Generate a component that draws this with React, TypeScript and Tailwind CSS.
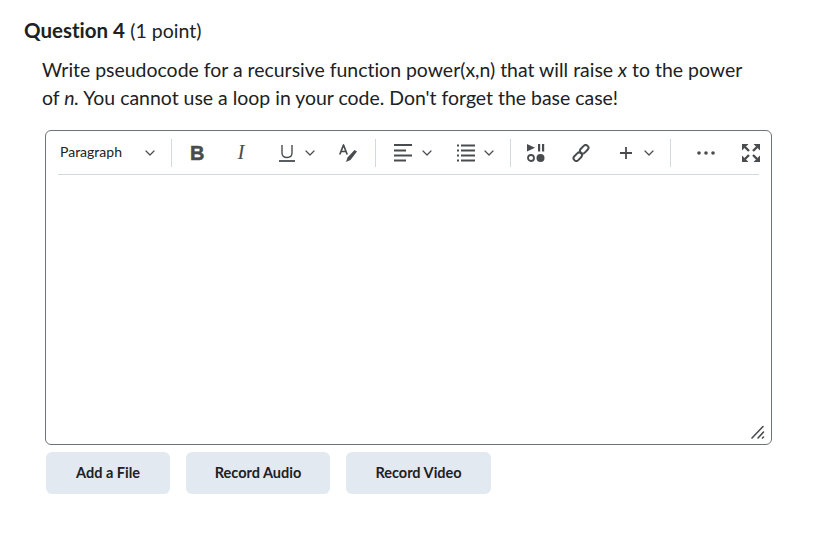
const ink = '#494c4e'

function Chevron({ className = '' }: { className?: string }) {
  return (
    <svg width="10" height="6" viewBox="0 0 10 6" className={`shrink-0 ${className}`} fill="none" stroke={ink} strokeWidth="1.200" strokeLinecap="round" strokeLinejoin="round">
      <path d="M1 1l4 4 4-4" />
    </svg>
  )
}

function Sep({ className = '' }: { className?: string }) {
  return <div className={`w-px h-7 bg-[#d3d9e3] shrink-0 ${className}`} />
}

const UnderlineIcon = () => (
  <svg width="18" height="18" viewBox="0 0 18 18" fill="none" stroke={ink} className="shrink-0 ml-[33px]">
    <path d="M4 1v8c0 3 2 4.500 5 4.500s5-1.500 5-4.500V1" strokeWidth="1.400" />
    <path d="M1 17h16" strokeWidth="1.800" />
  </svg>
)

const ColorIcon = () => (
  <svg width="18" height="18" viewBox="0 0 18 18" fill="none" className="shrink-0 ml-[24px]">
    <path d="M.8 10.500L4.500 1l3.700 9.500M2 7.500h5" stroke={ink} strokeWidth="1.700" strokeLinejoin="round" />
    <path d="M18 7.500l-2.500-1.500-7 7.500-1.500 4.500 4.500-2z" fill={ink} />
  </svg>
)

const AlignIcon = () => (
  <svg width="18" height="18" viewBox="0 0 18 18" stroke={ink} strokeWidth="1.800" fill="none" className="shrink-0 ml-[18px]">
    <path d="M0 1h18M0 6.500h12M0 11.500h18M0 16.500h12" />
  </svg>
)

const ListIcon = () => (
  <svg width="18" height="18" viewBox="0 0 18 18" stroke={ink} strokeWidth="1.800" fill="none" className="shrink-0 ml-[25px]">
    <path d="M4 1.500h14M4 6.500h14M4 11.500h14M4 16.500h14" />
    <path d="M0 1.500h2M0 6.500h2M0 11.500h2M0 16.500h2" />
  </svg>
)

const MediaIcon = () => (
  <svg width="18" height="18" viewBox="0 0 18 18" fill={ink} className="shrink-0 ml-[16px]">
    <path d="M0 0l8 3.700-8 3.800z" />
    <rect x="11" y="0" width="2.200" height="7.500" />
    <rect x="15" y="0" width="2.200" height="7.500" />
    <circle cx="4" cy="14" r="3" fill="none" stroke={ink} strokeWidth="1.800" />
    <circle cx="13.500" cy="14" r="4" />
  </svg>
)

const LinkIcon = () => (
  <svg width="18" height="18" viewBox="0 0 18 18" fill="none" stroke={ink} strokeWidth="2" className="shrink-0 ml-[27px]">
    <rect x="7.500" y="2.500" width="9.500" height="5.500" rx="2.750" transform="rotate(-45 12.250 5.250)" />
    <rect x="1" y="10" width="9.500" height="5.500" rx="2.750" transform="rotate(-45 5.750 12.750)" />
  </svg>
)

const PlusIcon = () => (
  <svg width="12" height="12" viewBox="0 0 12 12" stroke={ink} strokeWidth="1.800" className="shrink-0 ml-[30px]">
    <path d="M6 0v12M0 6h12" />
  </svg>
)

const DotsIcon = () => (
  <svg width="18" height="4" viewBox="0 0 18 4" fill={ink} className="shrink-0 ml-[26px]">
    <circle cx="2" cy="2" r="1.800" />
    <circle cx="9" cy="2" r="1.800" />
    <circle cx="16" cy="2" r="1.800" />
  </svg>
)

const FullscreenIcon = () => (
  <svg width="18" height="18" viewBox="0 0 18 18" fill={ink} stroke={ink} className="shrink-0 ml-[27px]">
    <path d="M0 0h6.500L0 6.500z" stroke="none" />
    <path d="M18 0h-6.500L18 6.500z" stroke="none" />
    <path d="M0 18h6.500L0 11.500z" stroke="none" />
    <path d="M18 18h-6.500L18 11.500z" stroke="none" />
    <path d="M3 3l4 4M15 3l-4 4M3 15l4-4M15 15l-4-4" strokeWidth="2.400" />
  </svg>
)

const ResizeGrip = () => (
  <svg width="14" height="14" viewBox="0 0 14 14" stroke={ink} strokeWidth="1.600" strokeLinecap="round">
    <path d="M1 13L12 1.500M7 13l5.500-6M11.500 13l1-1" />
  </svg>
)

function Toolbar() {
  return (
    <div className="flex items-center h-[44px] mx-3 border-b border-[#d3d9e3] text-[#494c4e]">
      <span className="ml-[2px] w-[85px] shrink-0 text-[14px] leading-[20px] mb-[2px] text-[#202122]">Paragraph</span>
      <Chevron />
      <Sep className="ml-[16px]" />
      <span className="ml-[18px] w-[14px] shrink-0 text-[20px] font-bold font-['Liberation_Sans',sans-serif] leading-none [-webkit-text-stroke:0.5px_#494c4e]">B</span>
      <span className="ml-[33px] w-[8px] shrink-0 text-center text-[21px] italic font-['Liberation_Serif',serif] leading-none">I</span>
      <UnderlineIcon />
      <Chevron className="ml-[9px]" />
      <ColorIcon />
      <Sep className="ml-[18px]" />
      <AlignIcon />
      <Chevron className="ml-[10px]" />
      <ListIcon />
      <Chevron className="ml-[9px]" />
      <Sep className="ml-[16px]" />
      <MediaIcon />
      <LinkIcon />
      <PlusIcon />
      <Chevron className="ml-[12px]" />
      <Sep className="ml-[16px]" />
      <DotsIcon />
      <FullscreenIcon />
    </div>
  )
}

export default function App() {
  return (
    <div className="w-[840px] h-[534px] bg-white font-['Lato',sans-serif] text-[#202122] pl-[24px] pt-[18px] overflow-hidden [font-variant-ligatures:none]">
      <h2 className="text-[20.500px] leading-[24px] text-[#202122]">
        <span className="font-bold">Question 4</span> <span className="text-[19.500px]">(1 point)</span>
      </h2>

      <p className="ml-[18px] mt-[13px] w-[716px] text-[19.450px] leading-[28px]">
        Write pseudocode for a recursive function power(x,n) that will raise <em>x</em> to the power of <em>n.</em> You cannot use a loop in your code. Don't forget the base case!
      </p>

      <div className="ml-[21px] mt-[18px] w-[727px]">
        <div className="relative h-[315px] border border-[#6e7477] rounded-[6px] bg-white">
          <Toolbar />
          <div className="absolute right-[6px] bottom-[5px]"><ResizeGrip /></div>
        </div>

        <div className="flex gap-[16px] mt-[7px] ml-px">
          <button className="w-[124px] h-[42px] pb-px rounded-[6px] bg-[#e3e9f1] text-[14.500px] font-bold">Add a File</button>
          <button className="w-[144px] h-[42px] pb-px rounded-[6px] bg-[#e3e9f1] text-[14.500px] font-bold">Record Audio</button>
          <button className="w-[145px] h-[42px] pb-px rounded-[6px] bg-[#e3e9f1] text-[14.500px] font-bold">Record Video</button>
        </div>
      </div>
    </div>
  )
}
